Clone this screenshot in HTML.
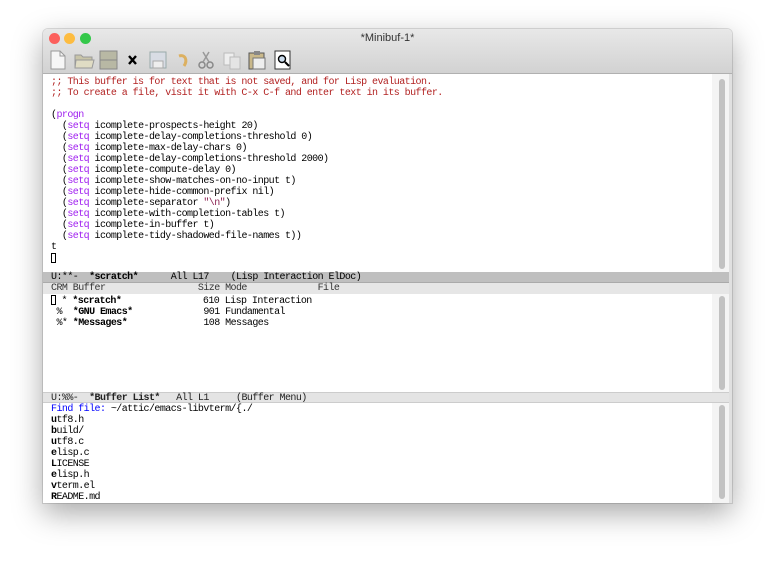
<!DOCTYPE html>
<html><head><meta charset="utf-8"><style>
*{margin:0;padding:0;box-sizing:border-box}
body{width:775px;height:561px;background:#fff;position:relative;overflow:hidden;font-family:"Liberation Mono",monospace}
.win{position:absolute;left:43px;top:29px;width:689px;height:474px;border-radius:5px 5px 0 0;background:#fff;box-shadow:0 10px 30px rgba(0,0,0,.35),0 0 0 1px rgba(0,0,0,.12);overflow:hidden}
.tb{position:absolute;left:0;top:0;width:100%;height:45px;background:linear-gradient(#e8e8e8,#d2d2d2);border-bottom:1px solid #b0b0b0}
.title{position:absolute;top:3px;width:100%;text-align:center;font:11px "Liberation Sans",sans-serif;color:#333}
.dot{position:absolute;top:4px;width:11px;height:11px;border-radius:50%}
.ic{position:absolute;top:21px}
.txt{position:absolute;left:8px;font-size:10px;letter-spacing:-0.56px;line-height:11px;white-space:pre;color:#000}
.c{color:#b22222}.k{color:#a020f0}.s{color:#8b2252}.b{font-weight:bold}.bl{color:#0000ff}
.ml{position:absolute;left:0;width:686px;height:11px;font-size:10px;letter-spacing:-0.56px;line-height:11px;white-space:pre;padding-left:8px}
.sb{position:absolute;left:669px;width:17px;background:#f4f4f4}
.th{position:absolute;left:7px;width:6px;background:#c2c2c2;border-radius:3px}
.rb{position:absolute;left:686px;top:45px;width:3px;height:429px;background:#e0e0e0}
.cur{display:inline-block;width:5px;height:10px;border:1px solid #000;vertical-align:-2px;letter-spacing:0}
</style></head><body>
<div class="win">
 <div class="tb">
  <div class="dot" style="left:6px;background:#fc605c"></div>
  <div class="dot" style="left:21px;background:#fdbc40"></div>
  <div class="dot" style="left:37px;background:#34c84a"></div>
  <div class="title">*Minibuf-1*</div>
  <svg class="ic" width="260" height="20" style="left:6px">
   <path d="M2 1h9l5 5v13H2z" fill="#f6f6f6" stroke="#999"/><path d="M11 1v5h5" fill="none" stroke="#999"/>
   <path d="M26 5h6l2 2h9v11H26z" fill="#c8c4a8" stroke="#999"/><path d="M27 10h18l-2 8H26z" fill="#e0dcc4" stroke="#999"/>
   <rect x="51" y="1" width="17" height="18" fill="#b8b8a4" stroke="#888"/><line x1="51" y1="10" x2="68" y2="10" stroke="#888"/>
   <path d="M80 6l7 8M87 6l-7 8" stroke="#000" stroke-width="2.4"/>
   <rect x="101" y="2" width="16" height="16" fill="#d8dce4" stroke="#9aa"/><rect x="104" y="11" width="10" height="7" fill="#eee" stroke="#aaa"/>
   <path d="M130 6c6-2 9 4 5 10" fill="none" stroke="#dcb060" stroke-width="3"/>
   <circle cx="153" cy="15" r="3" fill="none" stroke="#888" stroke-width="1.5"/><circle cx="161" cy="15" r="3" fill="none" stroke="#888" stroke-width="1.5"/><path d="M154 12l6-10M160 12l-6-10" stroke="#999" stroke-width="1.5"/>
   <rect x="175" y="3" width="10" height="12" fill="#eee" stroke="#bbb"/><rect x="181" y="7" width="10" height="12" fill="#e4e4e4" stroke="#bbb"/>
   <rect x="200" y="3" width="15" height="16" fill="#c9b88a" stroke="#555"/><rect x="205" y="1" width="6" height="4" fill="#888"/><rect x="204" y="8" width="12" height="11" fill="#eee" stroke="#777"/>
   <rect x="226" y="1" width="15" height="18" fill="#fff" stroke="#333"/><circle cx="233" cy="9" r="3.5" fill="#cde" stroke="#000" stroke-width="1.4"/><path d="M236 12l4 4" stroke="#000" stroke-width="2"/>
  </svg>
 </div>
 <div class="rb"></div>
 <div class="txt" style="top:48px"><span class="c">;; This buffer is for text that is not saved, and for Lisp evaluation.
;; To create a file, visit it with C-x C-f and enter text in its buffer.</span>

(<span class="k">progn</span>
  (<span class="k">setq</span> icomplete-prospects-height 20)
  (<span class="k">setq</span> icomplete-delay-completions-threshold 0)
  (<span class="k">setq</span> icomplete-max-delay-chars 0)
  (<span class="k">setq</span> icomplete-delay-completions-threshold 2000)
  (<span class="k">setq</span> icomplete-compute-delay 0)
  (<span class="k">setq</span> icomplete-show-matches-on-no-input t)
  (<span class="k">setq</span> icomplete-hide-common-prefix nil)
  (<span class="k">setq</span> icomplete-separator <span class="s">"\n"</span>)
  (<span class="k">setq</span> icomplete-with-completion-tables t)
  (<span class="k">setq</span> icomplete-in-buffer t)
  (<span class="k">setq</span> icomplete-tidy-shadowed-file-names t))
t
<span class="cur"></span></div>
 <div class="sb" style="top:45px;height:198px"><div class="th" style="top:5px;height:190px"></div></div>
 <div class="ml" style="top:243px;background:#bfbfbf;border-bottom:1px solid #aaa">U:**-  <span class="b">*scratch*</span>      All L17    (Lisp Interaction ElDoc)</div>
 <div class="ml" style="top:254px;background:#e6e6e6;color:#333">CRM Buffer                 Size Mode             File</div>
 <div class="txt" style="top:266px"><span class="cur"></span> * <span class="b">*scratch*</span>               610 Lisp Interaction
 %  <span class="b">*GNU Emacs*</span>             901 Fundamental
 %* <span class="b">*Messages*</span>              108 Messages</div>
 <div class="sb" style="top:265px;height:98px"><div class="th" style="top:2px;height:94px"></div></div>
 <div class="ml" style="top:363px;background:#e4e4e4;border-top:1px solid #ccc;border-bottom:1px solid #ccc;color:#222">U:%%-  <span class="b">*Buffer List*</span>   All L1     (Buffer Menu)</div>
 <div class="txt" style="top:375px"><span class="bl">Find file: </span>~/attic/emacs-libvterm/{./
<b>u</b>tf8.h
<b>b</b>uild/
<b>u</b>tf8.c
<b>e</b>lisp.c
<b>L</b>ICENSE
<b>e</b>lisp.h
<b>v</b>term.el
<b>R</b>EADME.md</div>
 <div class="sb" style="top:374px;height:100px"><div class="th" style="top:2px;height:94px"></div></div>
</div>
</body></html>
